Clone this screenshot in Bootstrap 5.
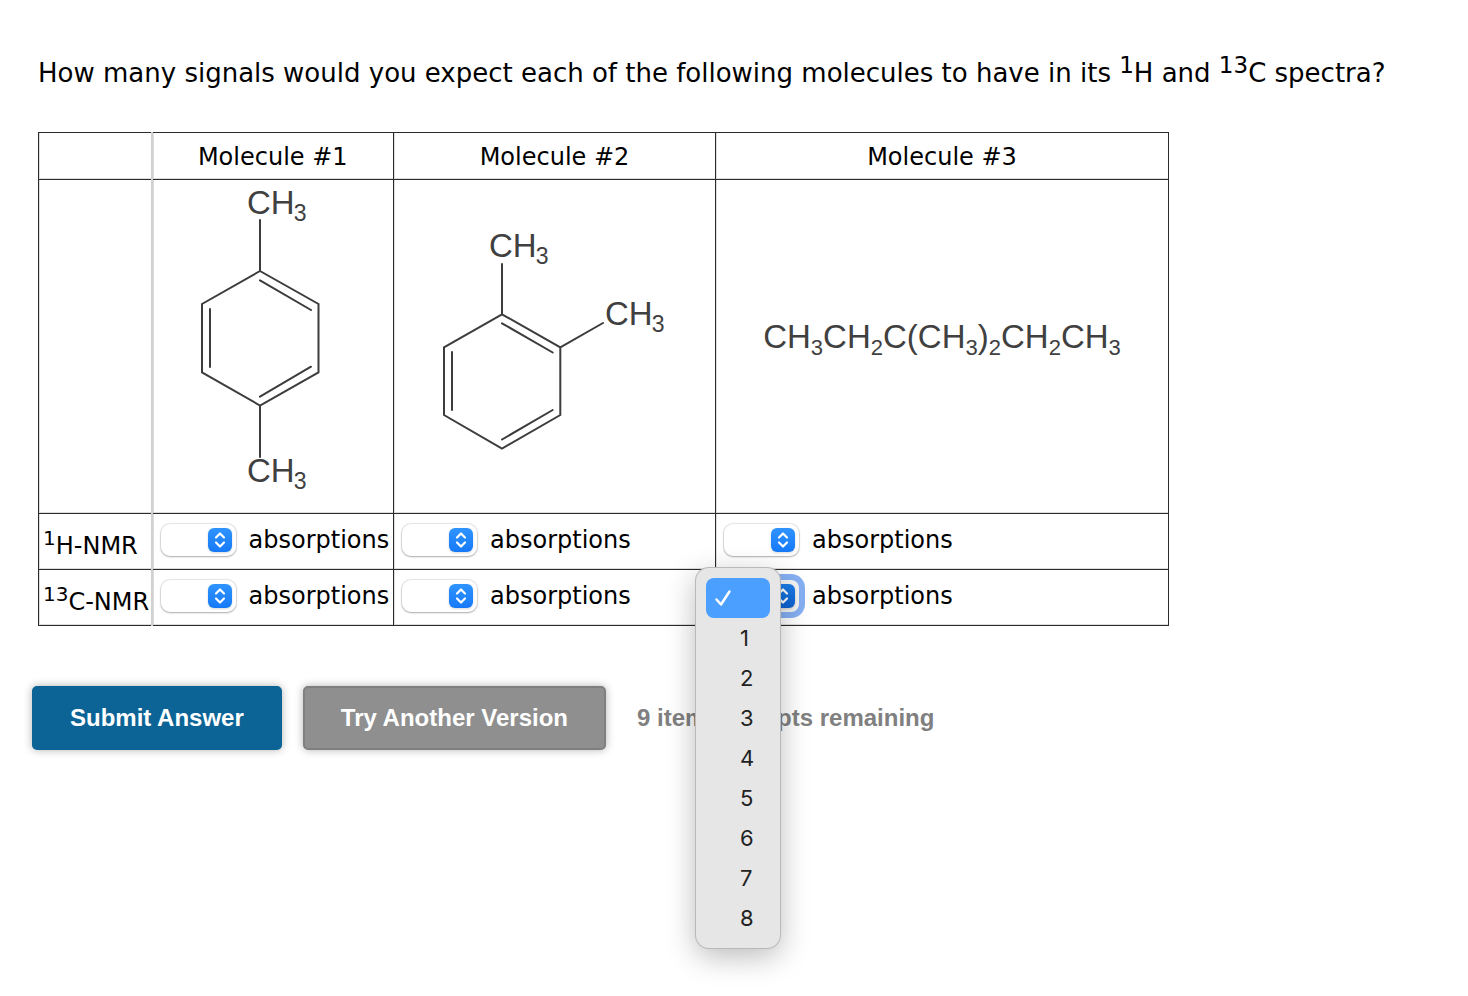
<!DOCTYPE html>
<html lang="en">
<head>
<meta charset="utf-8">
<meta name="viewport" content="width=device-width, initial-scale=1">
<title>NMR signals</title>
<link href="https://cdn.jsdelivr.net/npm/bootstrap@5.3.0/dist/css/bootstrap.min.css" rel="stylesheet">
<style>
  body { font-family: "DejaVu Sans", Verdana, sans-serif; font-size: 24px; line-height: 32px; color: #000; background: #fff; }
  .question-page { padding: 55px 32px 32px; }
  .question { font-size: 26px; line-height: 36px; padding-left: 6px; margin-bottom: 41px; }
  .question sup { font-size: 23px; line-height: 0; top: 0; vertical-align: 9px; }

  .nmr { margin-left: 6px; border-collapse: collapse; table-layout: fixed; width: 1131px; max-width: none; }
  .nmr th, .nmr td { border: 1px solid #2b2b2b; padding: 0; font-weight: 400; white-space: nowrap; box-shadow: inset 1px -1px #ddd; }
  .nmr .label-cell { border-right: 2px solid #d0d0d0; padding-left: 4px; }
  .nmr thead tr { height: 47px; }
  .nmr thead th { padding-top: 2px; }
  .nmr .structures { height: 334px; }
  .nmr .answers { height: 56px; }
  .nmr .answers sup { font-size: 20px; line-height: 0; top: 0; vertical-align: 9px; }
  .nmr .answers th { padding-top: 8px; }
  .c-label { width: 113px; } .c-one { width: 242px; } .c-two { width: 322px; }
  .nmr svg.molecule { display: block; margin: 0 auto; stroke: #3c3c3c; stroke-width: 2; fill: none; stroke-linecap: round; }
  .molecule text { font: 33px "Liberation Sans", Arial, sans-serif; fill: #404040; stroke: none; }
  .molecule .subscript { font-size: 23px; }
  .nmr .formula { font-family: "Liberation Sans", Arial, sans-serif; font-size: 33px; color: #404040; padding-bottom: 20px; }
  .formula sub { font-size: 22px; line-height: 0; bottom: 0; vertical-align: -7px; }

  .answer { gap: 13px; padding: 0 0 3px 8px; }
  .picker { display: grid; position: relative; width: 75px; height: 32px; }
  .picker select, .picker > svg { grid-area: 1 / 1; }
  .picker select { appearance: none; width: 100%; height: 32px; border: 0; border-radius: 9px; background: #fff; outline: 0; box-shadow: 0 0 1px 1px rgba(0,0,0,.1), 0 1px 2px rgba(0,0,0,.25); }
  .picker > svg { justify-self: end; align-self: center; margin-right: 4px; pointer-events: none; z-index: 1; filter: drop-shadow(0 1px 1px rgba(0,0,0,.15)); }
  .picker.is-open select { background: #f3f3f3; box-shadow: 0 0 0 6px #86b0f3; border-radius: 8px; }
  .choices { position: absolute; z-index: 5; left: -28px; top: -12px; width: 84px; padding: 10px; background: #e6e6e6; border-radius: 13px; box-shadow: 0 0 0 1px #b9b9b9, 0 8px 30px rgba(0,0,0,.28); font-family: Inter, sans-serif; font-size: 22px; color: #222; }
  .choices li { height: 40px; line-height: 40px; padding-left: 34px; }
  .choices .chosen { background: #4b9ffe; border-radius: 8px; padding-left: 8px; }

  .actions { margin-top: 60px; gap: 20px; font-family: "Liberation Sans", Arial, sans-serif; font-weight: 700; color: #808080; }
  .actions .btn { font: inherit; height: 64px; padding: 0 36px; color: #fff; border: 2px solid #0c6496; border-radius: 5px; background: #0c6496; box-shadow: 0 0 8px rgba(0,0,0,.3); }
  .actions .btn-again { background: #8f8f8f; border-color: #7f7f7f; }
  .actions { gap: 21px; }
  .attempts { margin-left: 10px; }
</style>
</head>
<body>
<main class="question-page min-vh-100">
  <p class="question">How many signals would you expect each of the following molecules to have in its <sup>1</sup>H and <sup>13</sup>C spectra?</p>

  <table class="nmr">
    <colgroup><col class="c-label"><col class="c-one"><col class="c-two"><col></colgroup>
    <thead>
      <tr class="text-center"><td class="label-cell"></td><th scope="col">Molecule #1</th><th scope="col">Molecule #2</th><th scope="col">Molecule #3</th></tr>
    </thead>
    <tbody>
      <tr class="structures">
        <td class="label-cell"></td>
        <td>
          <svg class="molecule" width="238" height="332" viewBox="0 1 238 332" role="img" aria-label="para-xylene">
            <path d="M106 40V91L164.500 124V192.300L106 225.500L48 192.300V124L106 91M106 225.500V277M56 129V187M106 100.300L157 130M157 186.700L106 216.700"/>
            <text x="93" y="34">CH<tspan class="subscript" dx="-1" dy="7">3</tspan></text>
            <text x="93" y="302">CH<tspan class="subscript" dx="-1" dy="7">3</tspan></text>
          </svg>
        </td>
        <td>
          <svg class="molecule" width="320" height="332" viewBox="0 1 320 332" role="img" aria-label="ortho-xylene">
            <path d="M107 84V134.300L165.300 167.300V235L107 268.500L49 235V167.300L107 134.300M165.300 167.300L208 143M57 172V230M107 143.300L157.700 172.500M107 259.500L157.700 230"/>
            <text x="94" y="77">CH<tspan class="subscript" dx="-1" dy="7">3</tspan></text>
            <text x="210" y="145">CH<tspan class="subscript" dx="-1" dy="7">3</tspan></text>
          </svg>
        </td>
        <td class="formula text-center">CH<sub>3</sub>CH<sub>2</sub>C(CH<sub>3</sub>)<sub>2</sub>CH<sub>2</sub>CH<sub>3</sub></td>
      </tr>
      <tr class="answers">
        <th scope="row" class="label-cell"><sup>1</sup>H-NMR</th>
        <td><div class="answer d-flex align-items-center"><span class="picker"><select id="h1"><option></option></select><svg width="24" height="24"><use href="#stepper"/></svg></span><label for="h1">absorptions</label></div></td>
        <td><div class="answer d-flex align-items-center"><span class="picker"><select id="h2"><option></option></select><svg width="24" height="24"><use href="#stepper"/></svg></span><label for="h2">absorptions</label></div></td>
        <td><div class="answer d-flex align-items-center"><span class="picker"><select id="h3"><option></option></select><svg width="24" height="24"><use href="#stepper"/></svg></span><label for="h3">absorptions</label></div></td>
      </tr>
      <tr class="answers">
        <th scope="row" class="label-cell"><sup>13</sup>C-NMR</th>
        <td><div class="answer d-flex align-items-center"><span class="picker"><select id="c1"><option></option></select><svg width="24" height="24"><use href="#stepper"/></svg></span><label for="c1">absorptions</label></div></td>
        <td><div class="answer d-flex align-items-center"><span class="picker"><select id="c2"><option></option></select><svg width="24" height="24"><use href="#stepper"/></svg></span><label for="c2">absorptions</label></div></td>
        <td><div class="answer d-flex align-items-center"><span class="picker is-open"><select id="c3"><option></option></select><svg width="24" height="24"><use href="#stepper-pressed"/></svg>
          <ul class="choices list-unstyled m-0" role="listbox" aria-label="Number of absorptions">
            <li class="chosen d-flex align-items-center" role="option" aria-selected="true"><svg width="18" height="20" viewBox="0 0 18 20" fill="none" stroke="#fff" stroke-width="2.500" stroke-linecap="round" stroke-linejoin="round"><path d="M2.500 11.500L7 16.500L15.500 3.500"/></svg></li>
            <li role="option">1</li><li role="option">2</li><li role="option">3</li><li role="option">4</li><li role="option">5</li><li role="option">6</li><li role="option">7</li><li role="option">8</li>
          </ul></span><label for="c3">absorptions</label></div></td>
      </tr>
    </tbody>
  </table>

  <div class="actions d-flex align-items-center">
    <button type="button" class="btn">Submit Answer</button>
    <button type="button" class="btn btn-again">Try Another Version</button>
    <span class="attempts">9 item attempts remaining</span>
  </div>

  <svg class="d-block" width="0" height="0" aria-hidden="true">
    <defs>
      <linearGradient id="blue" x2="0" y2="1"><stop stop-color="#2f93ff"/><stop offset="1" stop-color="#167af8"/></linearGradient>
      <linearGradient id="pressed" x2="0" y2="1"><stop stop-color="#1c7ce5"/><stop offset="1" stop-color="#0d62d2"/></linearGradient>
      <path id="arrows" d="M8 9.500l4-4 4 4M8 14.500l4 4 4-4" fill="none" stroke="#fff" stroke-width="2.200" stroke-linecap="round" stroke-linejoin="round"/>
      <g id="stepper"><rect width="24" height="24" rx="6" fill="url(#blue)"/><use href="#arrows"/></g>
      <g id="stepper-pressed"><rect width="24" height="24" rx="6" fill="url(#pressed)"/><use href="#arrows"/></g>
    </defs>
  </svg>
</main>
<script src="https://cdn.jsdelivr.net/npm/bootstrap@5.3.0/dist/js/bootstrap.bundle.min.js"></script>
</body>
</html>
